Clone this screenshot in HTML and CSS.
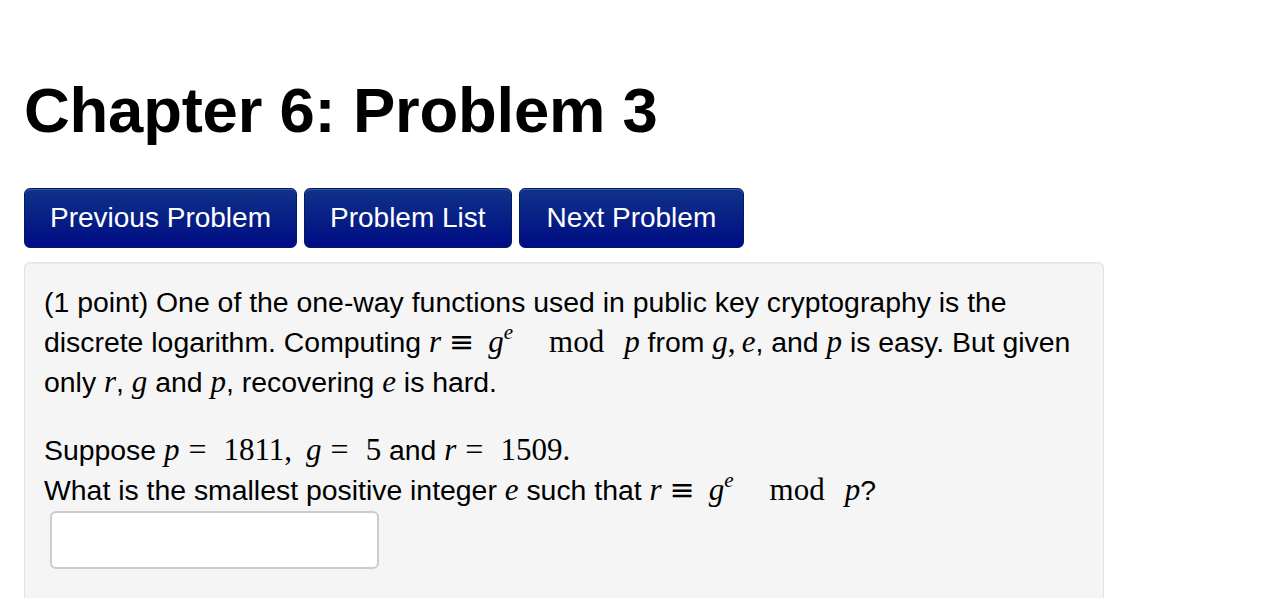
FILE: index.html
```html
<!DOCTYPE html>
<html lang="en">
<head>
  <meta charset="UTF-8">
  <meta name="viewport" content="width=device-width, initial-scale=1.0">
  <title>Chapter 6: Problem 3</title>
  <link rel="stylesheet" href="styles.css">
</head>
<body>
  <div class="container">
    <h1>Chapter 6: Problem 3</h1>
    <!-- Problem navigation -->
    <div class="problem-nav">
      <button class="btn">Previous Problem</button>
      <button class="btn">Problem List</button>
      <button class="btn">Next Problem</button>
    </div>
    <!-- Problem body -->
    <div class="well">
      <p>(1 point) One of the one-way functions used in public key cryptography is the discrete logarithm. Computing <span class="math"><i>r</i><span class="rel">&equiv;</span><i>g</i><sup><i>e</i></sup><span class="mod">mod</span><i>p</i></span> from <span class="math"><i>g</i>,&thinsp;<i>e</i></span>, and <span class="math"><i>p</i></span> is easy. But given only <span class="math"><i>r</i></span>, <span class="math"><i>g</i></span> and <span class="math"><i>p</i></span>, recovering <span class="math"><i>e</i></span> is hard.</p>
      <p>Suppose <span class="math"><i>p</i><span class="rel eq">=</span>1811,&nbsp;&thinsp;<i>g</i><span class="rel eq">=</span>5</span> and <span class="math"><i>r</i><span class="rel eq">=</span>1509.</span><br>
      What is the smallest positive integer <span class="math"><i>e</i></span> such that <span class="math"><i>r</i><span class="rel">&equiv;</span><i>g</i><sup><i>e</i></sup><span class="mod">mod</span><i>p</i></span>?</p>
      <input type="text" class="answer">
    </div>
  </div>
</body>
</html>
```

FILE: styles.css
```css
/* General */
body {
  margin: 0;
  padding: 0;
  background: #fff;
  color: #000;
  font-family: "Liberation Sans", Arial, sans-serif;
}

.container {
  padding: 0 24px;
}

h1 {
  font-size: 63.4px;
  line-height: 70px;
  font-weight: bold;
  margin: 75px 0 43px;
  letter-spacing: -0.2px;
}

/* Navigation buttons */
.problem-nav {
  display: flex;
  gap: 7px;
  margin-bottom: 14px;
}

.btn {
  font-family: "Liberation Sans", Arial, sans-serif;
  font-size: 28px;
  color: #fff;
  height: 60px;
  padding: 0 25px;
  border: 1px solid #001a66;
  border-radius: 6px;
  background: linear-gradient(to bottom, #0f3389, #000c84);
  box-shadow: inset 0 1px 0 rgba(255, 255, 255, 0.2);
  cursor: pointer;
}

.btn:last-child {
  padding: 0 27px;
}

/* Problem well */
.well {
  width: 1040px;
  min-height: 400px;
  padding: 19px;
  background: #f5f5f5;
  border: 1px solid #e3e3e3;
  border-radius: 6px;
  box-shadow: inset 0 1px 1px rgba(0, 0, 0, 0.05);
}

.well p {
  font-size: 28.4px;
  line-height: 40px;
  margin: 0 0 28px;
}

.well p + p {
  margin-bottom: 0;
}

/* Math */
.math {
  font-family: "Liberation Serif", "Times New Roman", serif;
  font-size: 31px;
  line-height: 1;
}

.math i {
  font-style: italic;
}

.math sup {
  font-size: 21px;
  vertical-align: 13px;
  line-height: 0;
}

.rel {
  font-family: "DejaVu Sans", sans-serif;
  font-size: 30px;
  margin: 0 14px 0 8px;
}

.rel.eq {
  font-family: "Liberation Serif", serif;
  font-size: 32px;
  margin: 0 17px 0 9px;
}

.mod {
  margin: 0 20px 0 36px;
}

.answer {
  display: block;
  margin: 1px 0 0 6px;
  width: 325px;
  height: 54px;
  box-sizing: content-box;
  padding: 0;
  border: 2px solid #ccc;
  border-radius: 6px;
  background: #fff;
}
```
